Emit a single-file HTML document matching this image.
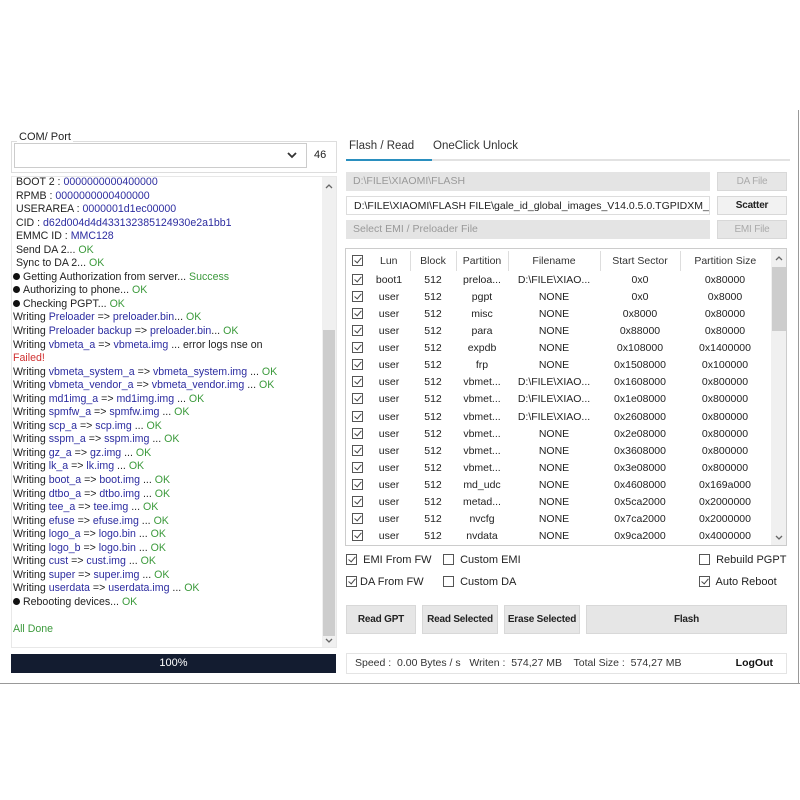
<!DOCTYPE html><html><head><style>
*{box-sizing:border-box;margin:0;padding:0}
body{width:800px;height:800px;background:#fff;font-family:"Liberation Sans",sans-serif;font-size:11px;color:#222;position:relative;overflow:hidden}
.a{position:absolute}
.b{color:#2c2ca0}.g{color:#3c9a3c}.r{color:#d03030}
.log div{height:13.55px;line-height:13.55px;white-space:nowrap}
.dot{display:inline-block;width:7px;height:7px;border-radius:50%;background:#111;margin-right:3px;vertical-align:0}
.fld{position:absolute;background:#e4e4e4;height:19px;line-height:19px;padding-left:7px;color:#999;font-size:10.5px}
.btn{position:absolute;background:#e6e6e6;border:1px solid #d8d8d8;text-align:center;font-weight:bold;font-size:10px;white-space:nowrap;letter-spacing:-0.2px}
.cb{display:inline-block;width:11px;height:11px;border:1px solid #555;position:relative;vertical-align:-2px}
.cb.c:after{content:"";position:absolute;left:3px;top:0px;width:3px;height:6px;border:solid #444;border-width:0 1.3px 1.3px 0;transform:rotate(40deg)}
table{border-collapse:collapse;font-size:10.5px}
td{height:17.13px;text-align:center;padding:0;white-space:nowrap}
</style></head><body>
<div class="a" style="left:11px;top:141px;width:326px;height:32px;border:1px solid #ddd"></div>
<div class="a" style="left:17px;top:131px;background:#fff;padding:0 2px;font-size:11px">COM/ Port</div>
<div class="a" style="left:14px;top:143px;width:293px;height:25px;border:1px solid #ccc;background:#fff"></div>
<svg class="a" style="left:287px;top:152px" width="10" height="7"><path d="M1 1L5 5L9 1" stroke="#333" stroke-width="1.8" fill="none"/></svg>
<div class="a" style="left:314px;top:149px">46</div>
<div class="a" style="left:11px;top:176px;width:326px;height:472px;border:1px solid #e8e8e8"></div>
<div class="a" style="left:322px;top:177px;width:14px;height:470px;background:#f0f0f0"></div>
<div class="a" style="left:323px;top:330px;width:12px;height:306px;background:#cdcdcd"></div>
<svg class="a" style="left:325px;top:183px" width="8" height="6"><path d="M1 5L4 2L7 5" stroke="#666" stroke-width="1.3" fill="none"/></svg>
<svg class="a" style="left:325px;top:638px" width="8" height="6"><path d="M1 1L4 4L7 1" stroke="#666" stroke-width="1.3" fill="none"/></svg>
<div class="a log" style="left:13px;top:176px;font-size:10.6px">
<div>&nbsp;BOOT 2 : <span class="b">0000000000400000</span></div>
<div>&nbsp;RPMB : <span class="b">0000000000400000</span></div>
<div>&nbsp;USERAREA : <span class="b">0000001d1ec00000</span></div>
<div>&nbsp;CID : <span class="b">d62d004d4d433132385124930e2a1bb1</span></div>
<div>&nbsp;EMMC ID : <span class="b">MMC128</span></div>
<div>&nbsp;Send DA 2... <span class="g">OK</span></div>
<div>&nbsp;Sync to DA 2... <span class="g">OK</span></div>
<div><span class="dot"></span>Getting Authorization from server... <span class="g">Success</span></div>
<div><span class="dot"></span>Authorizing to phone... <span class="g">OK</span></div>
<div><span class="dot"></span>Checking PGPT... <span class="g">OK</span></div>
<div>Writing <span class="b">Preloader</span> =&gt; <span class="b">preloader.bin</span>... <span class="g">OK</span></div>
<div>Writing <span class="b">Preloader backup</span> =&gt; <span class="b">preloader.bin</span>... <span class="g">OK</span></div>
<div>Writing <span class="b">vbmeta_a</span> =&gt; <span class="b">vbmeta.img</span> ... error logs nse on</div>
<div class="r">Failed!</div>
<div>Writing <span class="b">vbmeta_system_a</span> =&gt; <span class="b">vbmeta_system.img</span> ... <span class="g">OK</span></div>
<div>Writing <span class="b">vbmeta_vendor_a</span> =&gt; <span class="b">vbmeta_vendor.img</span> ... <span class="g">OK</span></div>
<div>Writing <span class="b">md1img_a</span> =&gt; <span class="b">md1img.img</span> ... <span class="g">OK</span></div>
<div>Writing <span class="b">spmfw_a</span> =&gt; <span class="b">spmfw.img</span> ... <span class="g">OK</span></div>
<div>Writing <span class="b">scp_a</span> =&gt; <span class="b">scp.img</span> ... <span class="g">OK</span></div>
<div>Writing <span class="b">sspm_a</span> =&gt; <span class="b">sspm.img</span> ... <span class="g">OK</span></div>
<div>Writing <span class="b">gz_a</span> =&gt; <span class="b">gz.img</span> ... <span class="g">OK</span></div>
<div>Writing <span class="b">lk_a</span> =&gt; <span class="b">lk.img</span> ... <span class="g">OK</span></div>
<div>Writing <span class="b">boot_a</span> =&gt; <span class="b">boot.img</span> ... <span class="g">OK</span></div>
<div>Writing <span class="b">dtbo_a</span> =&gt; <span class="b">dtbo.img</span> ... <span class="g">OK</span></div>
<div>Writing <span class="b">tee_a</span> =&gt; <span class="b">tee.img</span> ... <span class="g">OK</span></div>
<div>Writing <span class="b">efuse</span> =&gt; <span class="b">efuse.img</span> ... <span class="g">OK</span></div>
<div>Writing <span class="b">logo_a</span> =&gt; <span class="b">logo.bin</span> ... <span class="g">OK</span></div>
<div>Writing <span class="b">logo_b</span> =&gt; <span class="b">logo.bin</span> ... <span class="g">OK</span></div>
<div>Writing <span class="b">cust</span> =&gt; <span class="b">cust.img</span> ... <span class="g">OK</span></div>
<div>Writing <span class="b">super</span> =&gt; <span class="b">super.img</span> ... <span class="g">OK</span></div>
<div>Writing <span class="b">userdata</span> =&gt; <span class="b">userdata.img</span> ... <span class="g">OK</span></div>
<div><span class="dot"></span>Rebooting devices... <span class="g">OK</span></div>
<div></div>
<div class="g">All Done</div>
</div>
<div class="a" style="left:11px;top:654px;width:325px;height:19px;background:#131c30;color:#fff;text-align:center;line-height:19px">100%</div>

<div class="a" style="left:349px;top:140px;font-size:11.5px;color:#333">Flash / Read</div>
<div class="a" style="left:433px;top:140px;font-size:11.5px;color:#333">OneClick Unlock</div>
<div class="a" style="left:346px;top:159px;width:444px;height:2px;background:#e2e2e2"></div>
<div class="a" style="left:346px;top:159px;width:86px;height:2px;background:#2a8fbf"></div>
<div class="fld" style="left:346px;top:172px;width:364px">D:\FILE\XIAOMI\FLASH</div>
<div class="fld" style="left:346px;top:196px;width:364px;background:#fff;border:1px solid #ddd;color:#222;overflow:hidden;white-space:nowrap">D:\FILE\XIAOMI\FLASH FILE\gale_id_global_images_V14.0.5.0.TGPIDXM_13</div>
<div class="fld" style="left:346px;top:220px;width:364px">Select EMI / Preloader File</div>
<div class="btn" style="left:717px;top:172px;width:70px;height:19px;line-height:17px;color:#aaa;font-weight:normal">DA File</div>
<div class="btn" style="left:717px;top:196px;width:70px;height:19px;line-height:17px;background:#f2f2f2">Scatter</div>
<div class="btn" style="left:717px;top:220px;width:70px;height:19px;line-height:17px;color:#aaa;font-weight:normal">EMI File</div>

<div class="a" style="left:345px;top:248px;width:442px;height:298px;border:1px solid #ccc;overflow:hidden">
<div class="a" style="left:425px;top:0;width:16px;height:296px;background:#f0f0f0"></div>
<div class="a" style="left:426px;top:18px;width:14px;height:64px;background:#cdcdcd"></div>
<svg class="a" style="left:429px;top:6px" width="8" height="6"><path d="M1 5L4 2L7 5" stroke="#666" stroke-width="1.3" fill="none"/></svg>
<svg class="a" style="left:429px;top:286px" width="8" height="6"><path d="M1 1L4 4L7 1" stroke="#666" stroke-width="1.3" fill="none"/></svg>
<table class="a" style="left:0;top:2px;width:424px">
<colgroup><col style="width:22px"><col style="width:42px"><col style="width:46px"><col style="width:52px"><col style="width:92px"><col style="width:80px"><col style="width:90px"></colgroup>
<tr style="color:#333"><td style="height:20px"><span class="cb c"></span></td><td style="border-right:1px solid #ddd">Lun</td><td style="border-right:1px solid #ddd">Block</td><td style="border-right:1px solid #ddd">Partition</td><td style="border-right:1px solid #ddd">Filename</td><td style="border-right:1px solid #ddd">Start Sector</td><td>Partition Size</td></tr>
<tr><td><span class="cb c"></span></td><td>boot1</td><td>512</td><td>preloa...</td><td>D:\FILE\XIAO...</td><td>0x0</td><td>0x80000</td></tr>
<tr><td><span class="cb c"></span></td><td>user</td><td>512</td><td>pgpt</td><td>NONE</td><td>0x0</td><td>0x8000</td></tr>
<tr><td><span class="cb c"></span></td><td>user</td><td>512</td><td>misc</td><td>NONE</td><td>0x8000</td><td>0x80000</td></tr>
<tr><td><span class="cb c"></span></td><td>user</td><td>512</td><td>para</td><td>NONE</td><td>0x88000</td><td>0x80000</td></tr>
<tr><td><span class="cb c"></span></td><td>user</td><td>512</td><td>expdb</td><td>NONE</td><td>0x108000</td><td>0x1400000</td></tr>
<tr><td><span class="cb c"></span></td><td>user</td><td>512</td><td>frp</td><td>NONE</td><td>0x1508000</td><td>0x100000</td></tr>
<tr><td><span class="cb c"></span></td><td>user</td><td>512</td><td>vbmet...</td><td>D:\FILE\XIAO...</td><td>0x1608000</td><td>0x800000</td></tr>
<tr><td><span class="cb c"></span></td><td>user</td><td>512</td><td>vbmet...</td><td>D:\FILE\XIAO...</td><td>0x1e08000</td><td>0x800000</td></tr>
<tr><td><span class="cb c"></span></td><td>user</td><td>512</td><td>vbmet...</td><td>D:\FILE\XIAO...</td><td>0x2608000</td><td>0x800000</td></tr>
<tr><td><span class="cb c"></span></td><td>user</td><td>512</td><td>vbmet...</td><td>NONE</td><td>0x2e08000</td><td>0x800000</td></tr>
<tr><td><span class="cb c"></span></td><td>user</td><td>512</td><td>vbmet...</td><td>NONE</td><td>0x3608000</td><td>0x800000</td></tr>
<tr><td><span class="cb c"></span></td><td>user</td><td>512</td><td>vbmet...</td><td>NONE</td><td>0x3e08000</td><td>0x800000</td></tr>
<tr><td><span class="cb c"></span></td><td>user</td><td>512</td><td>md_udc</td><td>NONE</td><td>0x4608000</td><td>0x169a000</td></tr>
<tr><td><span class="cb c"></span></td><td>user</td><td>512</td><td>metad...</td><td>NONE</td><td>0x5ca2000</td><td>0x2000000</td></tr>
<tr><td><span class="cb c"></span></td><td>user</td><td>512</td><td>nvcfg</td><td>NONE</td><td>0x7ca2000</td><td>0x2000000</td></tr>
<tr><td><span class="cb c"></span></td><td>user</td><td>512</td><td>nvdata</td><td>NONE</td><td>0x9ca2000</td><td>0x4000000</td></tr>
</table></div>

<div class="a" style="left:346px;top:554px"><span class="cb c"></span>&nbsp; EMI From FW</div>
<div class="a" style="left:443px;top:554px"><span class="cb"></span>&nbsp; Custom EMI</div>
<div class="a" style="left:699px;top:554px"><span class="cb"></span>&nbsp; Rebuild PGPT</div>
<div class="a" style="left:346px;top:576px"><span class="cb c"></span> DA From FW</div>
<div class="a" style="left:443px;top:576px"><span class="cb"></span>&nbsp; Custom DA</div>
<div class="a" style="left:699px;top:576px"><span class="cb c"></span>&nbsp; Auto Reboot</div>

<div class="btn" style="left:346px;top:605px;width:70px;height:29px;line-height:27px">Read GPT</div>
<div class="btn" style="left:422px;top:605px;width:76px;height:29px;line-height:27px">Read Selected</div>
<div class="btn" style="left:504px;top:605px;width:76px;height:29px;line-height:27px">Erase Selected</div>
<div class="btn" style="left:586px;top:605px;width:201px;height:29px;line-height:27px">Flash</div>

<div class="a" style="left:346px;top:653px;width:441px;height:21px;border:1px solid #e4e4e4;line-height:19px;padding-left:8px;font-size:10.5px;color:#333;white-space:nowrap">Speed :&nbsp; 0.00 Bytes / s &nbsp; Writen :&nbsp; 574,27 MB &nbsp;&nbsp; Total Size :&nbsp; 574,27 MB<b style="position:absolute;right:13px;color:#111">LogOut</b></div>
<div class="a" style="left:0;top:683px;width:800px;height:1px;background:#999"></div>
<div class="a" style="left:798px;top:110px;width:1px;height:574px;background:#999"></div>
</body></html>
